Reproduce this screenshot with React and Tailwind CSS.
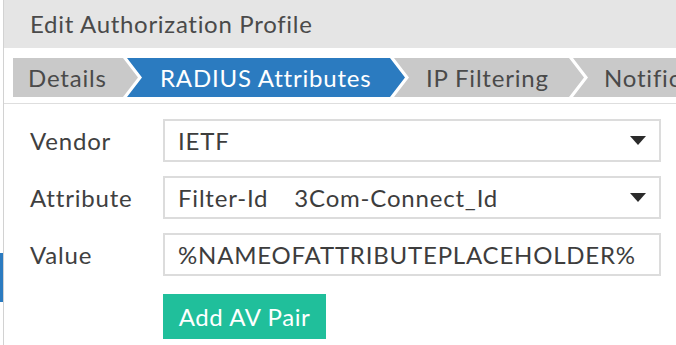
import React from 'react';

const font = { fontFamily: 'Lato, "Open Sans", sans-serif' };

function Tab({ label, active, first, width, pad }) {
  const clip = first
    ? '[clip-path:polygon(0_0,calc(100%-15px)_0,100%_50%,calc(100%-15px)_100%,0_100%)]'
    : '[clip-path:polygon(0_0,calc(100%-15px)_0,100%_50%,calc(100%-15px)_100%,0_100%,15px_50%)]';
  return (
    <div
      className={`flex h-full shrink-0 items-center ${first ? '' : '-ml-[11px]'} ${clip} ${
        active ? 'bg-[#2b7bc0] text-white' : 'bg-[#c9c9c9] text-[#4a4a4a]'
      }`}
      style={{ width, paddingLeft: pad }}
    >
      <span className="whitespace-nowrap text-[24px] leading-none tracking-[0.8px]">{label}</span>
    </div>
  );
}

function Caret() {
  return (
    <svg width="16" height="9" viewBox="0 0 16 9" className="shrink-0">
      <path d="M0 0 H16 L8 9 Z" fill="#2b2b2b" />
    </svg>
  );
}

function Field({ children, caret }) {
  return (
    <div className="flex h-[43px] items-center justify-between border-2 border-[#dcdcdc] bg-white pl-[13px] pr-[13px]">
      <div className="whitespace-pre text-[24px] leading-none tracking-[0.8px] text-[#3d3d3d]">{children}</div>
      {caret && <Caret />}
    </div>
  );
}

export default function App() {
  return (
    <div className="flex h-[345px] w-[676px] overflow-hidden bg-white" style={font}>
      <div className="w-[3px] shrink-0">
        <div className="mt-[253px] h-[49px] w-[3px] bg-[#2b7bc0]" />
      </div>
      <div className="flex min-w-0 flex-1 flex-col border-l border-[#d2d2d2]">
        <div className="flex h-[48px] shrink-0 items-center bg-[#e5e5e5] pl-[26px]">
          <h1 className="text-[24px] leading-none tracking-[0.7px] text-[#4a4a4a]">Edit Authorization Profile</h1>
        </div>
        <div className="mt-[10px] flex h-[39px] shrink-0 pl-[9px]">
          <Tab label="Details" first width={125} pad={15} />
          <Tab label="RADIUS Attributes" active width={278} pad={33} />
          <Tab label="IP Filtering" width={190} pad={32} />
          <Tab label="Notifications" width={200} pad={31} />
        </div>
        <div className="mt-[6px] border-t border-[#dedede]" />
        <div className="grid grid-cols-[133px_1fr] items-center gap-y-[14px] pl-[26px] pr-[15px] pt-[15px]">
          <span className="text-[24px] leading-none tracking-[0.8px] text-[#404040]">Vendor</span>
          <Field caret>IETF</Field>
          <span className="text-[24px] leading-none tracking-[0.8px] text-[#404040]">Attribute</span>
          <Field caret>
            Filter-Id<span className="ml-[26px]">3Com-Connect_Id</span>
          </Field>
          <span className="text-[24px] leading-none tracking-[0.8px] text-[#404040]">Value</span>
          <Field>%NAMEOFATTRIBUTEPLACEHOLDER%</Field>
          <div />
          <div className="mt-[4px]">
            <button className="flex h-[45px] w-[163px] items-center justify-center bg-[#20bf9b] text-[24px] leading-none tracking-[0.6px] text-white">
              Add AV Pair
            </button>
          </div>
        </div>
      </div>
    </div>
  );
}
